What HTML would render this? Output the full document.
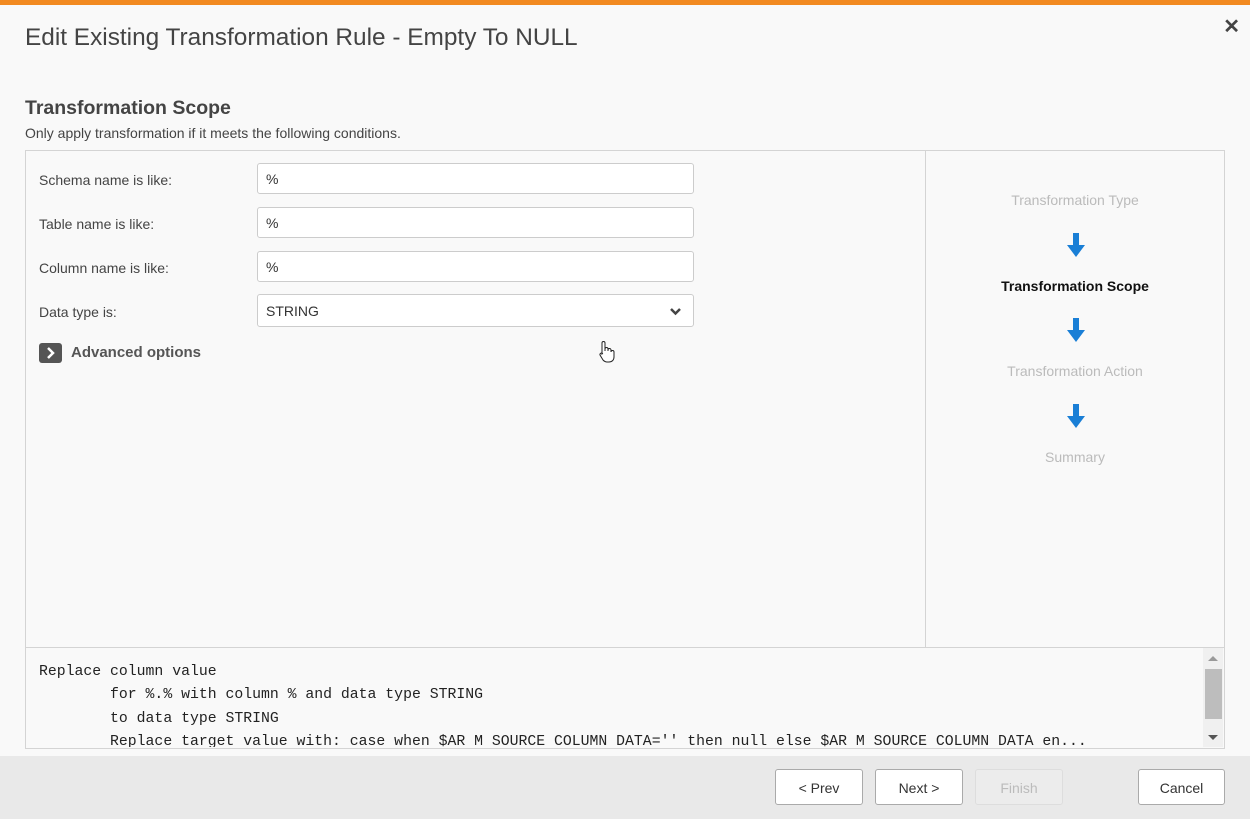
<!DOCTYPE html><html><head><style>
body{margin:0;width:1250px;height:819px;background:#f9f9f9;font-family:"Liberation Sans",sans-serif;position:relative;overflow:hidden;color:#333}
.a{position:absolute}
.inp{position:absolute;left:257px;border:1px solid #ccc;border-radius:3px;background:#fff;font-size:14px;line-height:31px;padding-left:8px;box-sizing:border-box;width:437px;height:31px}
.lbl{position:absolute;left:39px;font-size:14px;color:#444}
.st{position:absolute;left:926px;width:298px;text-align:center;font-size:14px;color:#bbb}
.arr{position:absolute;left:1067px}
.btn{position:absolute;top:769px;height:36px;border:1px solid #aaa;border-radius:3px;background:#fff;font-size:14px;text-align:center;line-height:36px;box-sizing:border-box;color:#333}
pre{margin:0;font-family:"Liberation Mono",monospace;font-size:14.8px;line-height:23.3px;color:#222}
</style></head><body>
<div class="a" style="left:0;top:0;width:1250px;height:5px;background:#f28a21"></div>
<div class="a" style="left:25px;top:24px;font-size:24.4px;color:#444">Edit Existing Transformation Rule - Empty To NULL</div>
<div class="a" style="right:10px;top:14px;font-size:20px;font-weight:bold;color:#444">✕</div>
<div class="a" style="left:25px;top:97px;font-size:19.5px;font-weight:bold;color:#444">Transformation Scope</div>
<div class="a" style="left:25px;top:125px;font-size:14px;color:#444">Only apply transformation if it meets the following conditions.</div>
<div class="a" style="left:25px;top:150px;width:1198px;height:597px;border:1px solid #d4d4d4;background:#f9f9f9"></div>
<div class="a" style="left:925px;top:150px;width:1px;height:497px;background:#d4d4d4"></div>
<div class="a" style="left:26px;top:647px;width:1198px;height:1px;background:#d4d4d4"></div>
<div class="lbl" style="top:172px">Schema name is like:</div>
<div class="lbl" style="top:216px">Table name is like:</div>
<div class="lbl" style="top:260px">Column name is like:</div>
<div class="lbl" style="top:304px">Data type is:</div>
<div class="inp" style="top:163px">%</div>
<div class="inp" style="top:207px">%</div>
<div class="inp" style="top:251px">%</div>
<div class="inp" style="top:294px;height:33px;line-height:33px">STRING<svg class="a" style="right:12px;top:13px" width="11" height="8" viewBox="0 0 11 8"><path d="M1 1l4.5 4.5L10 1" stroke="#444" stroke-width="2.5" fill="none"/></svg></div>
<div class="a" style="left:39px;top:343px;width:23px;height:20px;background:#555;border-radius:3px"><svg width="23" height="20"><path d="M9 5l5 5-5 5" stroke="#fff" stroke-width="2.5" fill="none"/></svg></div>
<div class="a" style="left:71px;top:344px;font-size:15px;font-weight:bold;color:#555">Advanced options</div>
<div class="st" style="top:192px">Transformation Type</div>
<div class="st" style="top:278px;color:#111;font-weight:bold">Transformation Scope</div>
<div class="st" style="top:363px">Transformation Action</div>
<div class="st" style="top:449px">Summary</div>
<svg class="arr" style="top:233px" width="18" height="25"><path d="M6 0h6v12h6l-9 12-9-12h6z" fill="#1a7fd6"/></svg>
<svg class="arr" style="top:318px" width="18" height="25"><path d="M6 0h6v12h6l-9 12-9-12h6z" fill="#1a7fd6"/></svg>
<svg class="arr" style="top:404px" width="18" height="25"><path d="M6 0h6v12h6l-9 12-9-12h6z" fill="#1a7fd6"/></svg>
<div class="a" style="left:26px;top:648px;width:1175px;height:99px;overflow:hidden"><pre style="padding:13px 0 0 13px">Replace column value
        for %.% with column % and data type STRING
        to data type STRING
        Replace target value with: case when $AR M SOURCE COLUMN DATA='' then null else $AR M SOURCE COLUMN DATA en...</pre></div>
<div class="a" style="left:1203px;top:648px;width:20px;height:99px;background:#f0f0f0"></div>
<div class="a" style="left:1205px;top:669px;width:17px;height:50px;background:#bdbdbd"></div>
<div class="a" style="left:1208px;top:656px;width:0;height:0;border:5px solid transparent;border-bottom:5px solid #999;border-top:0"></div>
<div class="a" style="left:1208px;top:735px;width:0;height:0;border:5px solid transparent;border-top:5px solid #555;border-bottom:0"></div>
<div class="a" style="left:0;top:756px;width:1250px;height:63px;background:#e9e9e9"></div>
<div class="btn" style="left:775px;width:88px">&lt; Prev</div>
<div class="btn" style="left:875px;width:88px">Next &gt;</div>
<div class="btn" style="left:975px;width:88px;border-color:#ddd;background:#ececec;color:#bbb">Finish</div>
<div class="btn" style="left:1138px;width:87px">Cancel</div>
<svg class="a" style="left:597px;top:340px" width="18" height="24"><path d="M5 14V3a1.5 1.5 0 013 0v8 -2a1.5 1.5 0 013 0v2-1a1.5 1.5 0 013 0v2a1.5 1.5 0 013 0v5c0 3-2 5-5 5h-2c-2 0-3-1-4-2l-3-5a1.5 1.5 0 012.5-1.5z" fill="#fff" stroke="#222" stroke-width="1"/></svg>
</body></html>
